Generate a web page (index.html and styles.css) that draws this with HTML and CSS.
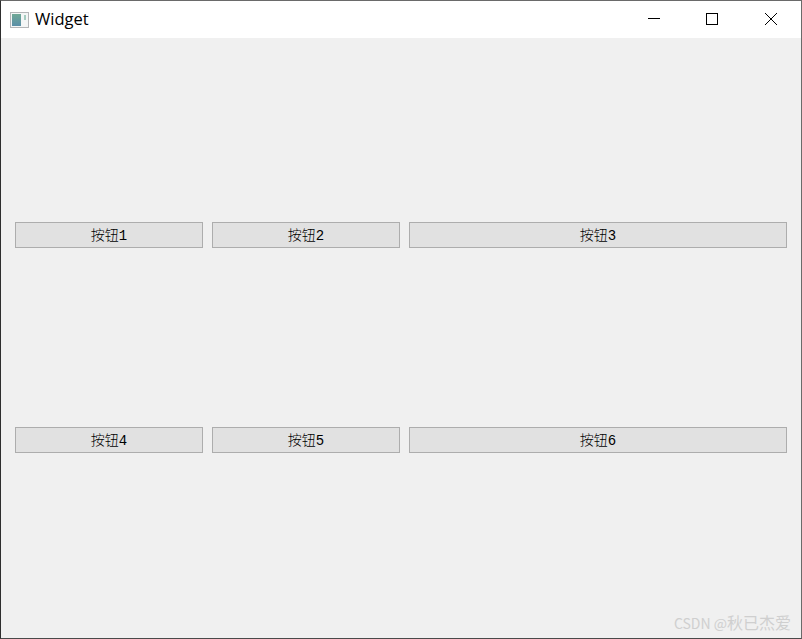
FILE: index.html
```html
<!DOCTYPE html>
<html lang="en">
<head>
    <meta charset="UTF-8">
    <meta name="viewport" content="width=device-width, initial-scale=1.0">
    <title>Widget</title>
    <link rel="stylesheet" href="styles.css">
</head>
<body>
    <div class="window">
        <div class="titlebar">
            <svg class="app-icon" width="20" height="16" viewBox="0 0 20 16">
                <defs>
                    <linearGradient id="pane" x1="0" y1="0" x2="0" y2="1">
                        <stop offset="0" stop-color="#6fa896"/>
                        <stop offset="1" stop-color="#5a8fa8"/>
                    </linearGradient>
                </defs>
                <rect x="0.5" y="0.5" width="18" height="15" fill="#f4f6f6" stroke="#b4b6b8"/>
                <rect x="2" y="2" width="9" height="12" fill="url(#pane)"/>
                <rect x="14" y="3" width="2" height="5" fill="#a5ccc0"/>
            </svg>
            <span class="title">Widget</span>
            <div class="controls">
                <svg class="control" width="12" height="12" viewBox="0 0 12 12">
                    <path d="M0 5.5H12" stroke="#000" fill="none"/>
                </svg>
                <svg class="control" width="12" height="12" viewBox="0 0 12 12">
                    <rect x="0.5" y="0.5" width="11" height="11" stroke="#000" fill="none"/>
                </svg>
                <svg class="control" width="12" height="12" viewBox="0 0 12 12">
                    <path d="M0 0L12 12M12 0L0 12" stroke="#000" fill="none"/>
                </svg>
            </div>
        </div>
        <div class="content">
            <div class="grid">
                <button class="btn">按钮<span class="num">1</span></button>
                <button class="btn">按钮<span class="num">2</span></button>
                <button class="btn">按钮<span class="num">3</span></button>
                <button class="btn">按钮<span class="num">4</span></button>
                <button class="btn">按钮<span class="num">5</span></button>
                <button class="btn">按钮<span class="num">6</span></button>
            </div>
        </div>
        <div class="watermark"><span class="wm-latin">CSDN @</span>秋已杰爱</div>
    </div>
</body>
</html>
```

FILE: styles.css
```css
html, body {
    margin: 0;
    padding: 0;
}

body {
    width: 802px;
    height: 639px;
    overflow: hidden;
}

.window {
    position: relative;
    box-sizing: border-box;
    width: 802px;
    height: 639px;
    display: flex;
    flex-direction: column;
    background: #f0f0f0;
    border: 1px solid #6a6a6a;
    border-left-color: #2e2e2e;
    border-bottom-color: #4a4a4a;
}

.titlebar {
    display: flex;
    align-items: center;
    height: 37px;
    background: #fff;
    padding-left: 9px;
}

.app-icon {
    margin-right: 5px;
}

.title {
    font-family: "Open Sans", "Noto Sans", sans-serif;
    font-size: 16.5px;
    color: #000;
    margin-top: -2px;
}

.controls {
    margin-left: auto;
    display: flex;
    align-items: center;
    margin-right: 24px;
    margin-top: -1px;
    gap: 46px;
}

.control:last-child {
    margin-left: 1px;
}

.content {
    flex: 1;
    display: flex;
    align-items: center;
    padding-left: 14px;
    padding-bottom: 2px;
}

.grid {
    display: grid;
    grid-template-columns: 188px 188px 378px;
    grid-auto-rows: 26px;
    column-gap: 9px;
    row-gap: 179px;
}

.btn {
    box-sizing: border-box;
    margin: 0;
    padding: 0 0 2px;
    background: #e1e1e1;
    border: 1px solid #adadad;
    font-family: "Noto Sans CJK SC", sans-serif;
    font-size: 14px;
    font-weight: 300;
    color: #000;
}

.num {
    font-family: "Liberation Mono", monospace;
    font-size: 14px;
}

.watermark {
    position: absolute;
    right: 10px;
    bottom: 4px;
    font-family: "Noto Sans CJK SC", sans-serif;
    font-size: 16px;
    color: #cfcfcf;
}

.wm-latin {
    font-size: 14px;
}
```
